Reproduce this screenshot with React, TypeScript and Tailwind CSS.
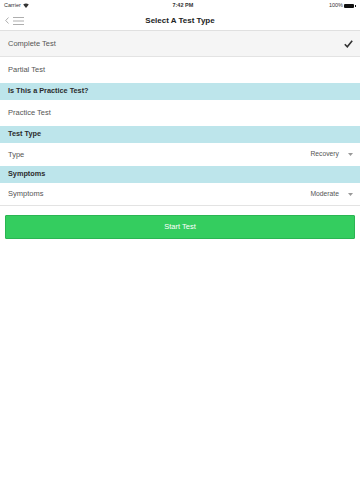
import { useState } from "react";

// Fila simple con texto a la izquierda
const Row = ({ label, className = "", children }: { label: string; className?: string; children?: React.ReactNode }) => (
  <div className={`flex items-center justify-between pl-[8px] pr-[7px] border-b border-[#e3e3e3] ${className}`}>
    <span className="text-[7.5px] text-[#555]">{label}</span>
    {children}
  </div>
);

const Header = ({ label, className = "" }: { label: string; className?: string }) => (
  <div className={`flex items-center pl-[8px] bg-[#bde5eb] ${className}`}>
    <span className="text-[7.3px] font-bold text-[#2b2b2b]">{label}</span>
  </div>
);

const Select = ({ value }: { value: string }) => (
  <div className="flex items-center gap-[9px]">
    <span className="text-[6.75px] text-[#555]">{value}</span>
    <svg width="5" height="3" viewBox="0 0 5 3">
      <path d="M0 0 L5 0 L2.5 3 Z" fill="#999" />
    </svg>
  </div>
);

const App = () => {
  const [selected] = useState("complete");

  return (
    <div className="w-[360px] h-[480px] bg-white" style={{ fontFamily: '"Liberation Sans", Arial, sans-serif' }}>
      {/* Barra de estado */}
      <div className="h-[11px] flex items-center justify-between px-[4px] text-[5.5px] text-[#333]">
        <div className="flex items-center gap-[2px]">
          <span>Carrier</span>
          <svg width="6" height="5" viewBox="0 0 6 5">
            <path d="M3 5 L0.2 1.6 A4.5 4.5 0 0 1 5.8 1.6 Z" fill="#333" />
          </svg>
        </div>
        <span className="font-bold ml-[8px]">7:42 PM</span>
        <div className="flex items-center gap-[1px]">
          <span>100%</span>
          <div className="w-[10px] h-[4px] bg-[#111] rounded-[1px]" />
          <div className="w-[1px] h-[2px] bg-[#111]" />
        </div>
      </div>

      {/* Barra de navegación */}
      <div className="relative h-[20px] flex items-center border-b border-[#e0e0e0]">
        <div className="flex items-center gap-[4px] pl-[5px]">
          <svg width="4" height="7" viewBox="0 0 4 7">
            <path d="M3.5 0.5 L0.7 3.5 L3.5 6.5" fill="none" stroke="#999" strokeWidth="0.8" />
          </svg>
          <svg width="11" height="8" viewBox="0 0 11 8">
            <path d="M0 0.5 H11 M0 4 H11 M0 7.5 H11" stroke="#999" strokeWidth="0.8" />
          </svg>
        </div>
        <span className="absolute left-0 right-0 text-center text-[8px] font-bold text-[#222] pointer-events-none">
          Select A Test Type
        </span>
      </div>

      {/* Opciones */}
      <Row label="Complete Test" className={`h-[26px] ${selected === "complete" ? "bg-[#f5f5f5]" : ""}`}>
        <svg width="9" height="8" viewBox="0 0 9 8">
          <path d="M0.8 4.2 L3.3 6.8 L8.2 0.8" fill="none" stroke="#333" strokeWidth="1.6" />
        </svg>
      </Row>
      <Row label="Partial Test" className="h-[26px] border-b-0" />

      <Header label="Is This a Practice Test?" className="h-[17px]" />
      <Row label="Practice Test" className="h-[26px] border-b-0" />

      <Header label="Test Type" className="h-[17px]" />
      <Row label="Type" className="h-[23px] border-b-0">
        <Select value="Recovery" />
      </Row>

      <Header label="Symptoms" className="h-[17px]" />
      <Row label="Symptoms" className="h-[23px]">
        <Select value="Moderate" />
      </Row>

      {/* Botón */}
      <div className="px-[5px] pt-[6px]">
        <button className="w-full h-[24px] bg-[#34cd5f] border border-[#2ab552] rounded-[1px] text-white text-[7.5px]">
          Start Test
        </button>
      </div>
    </div>
  );
};

export default App;
